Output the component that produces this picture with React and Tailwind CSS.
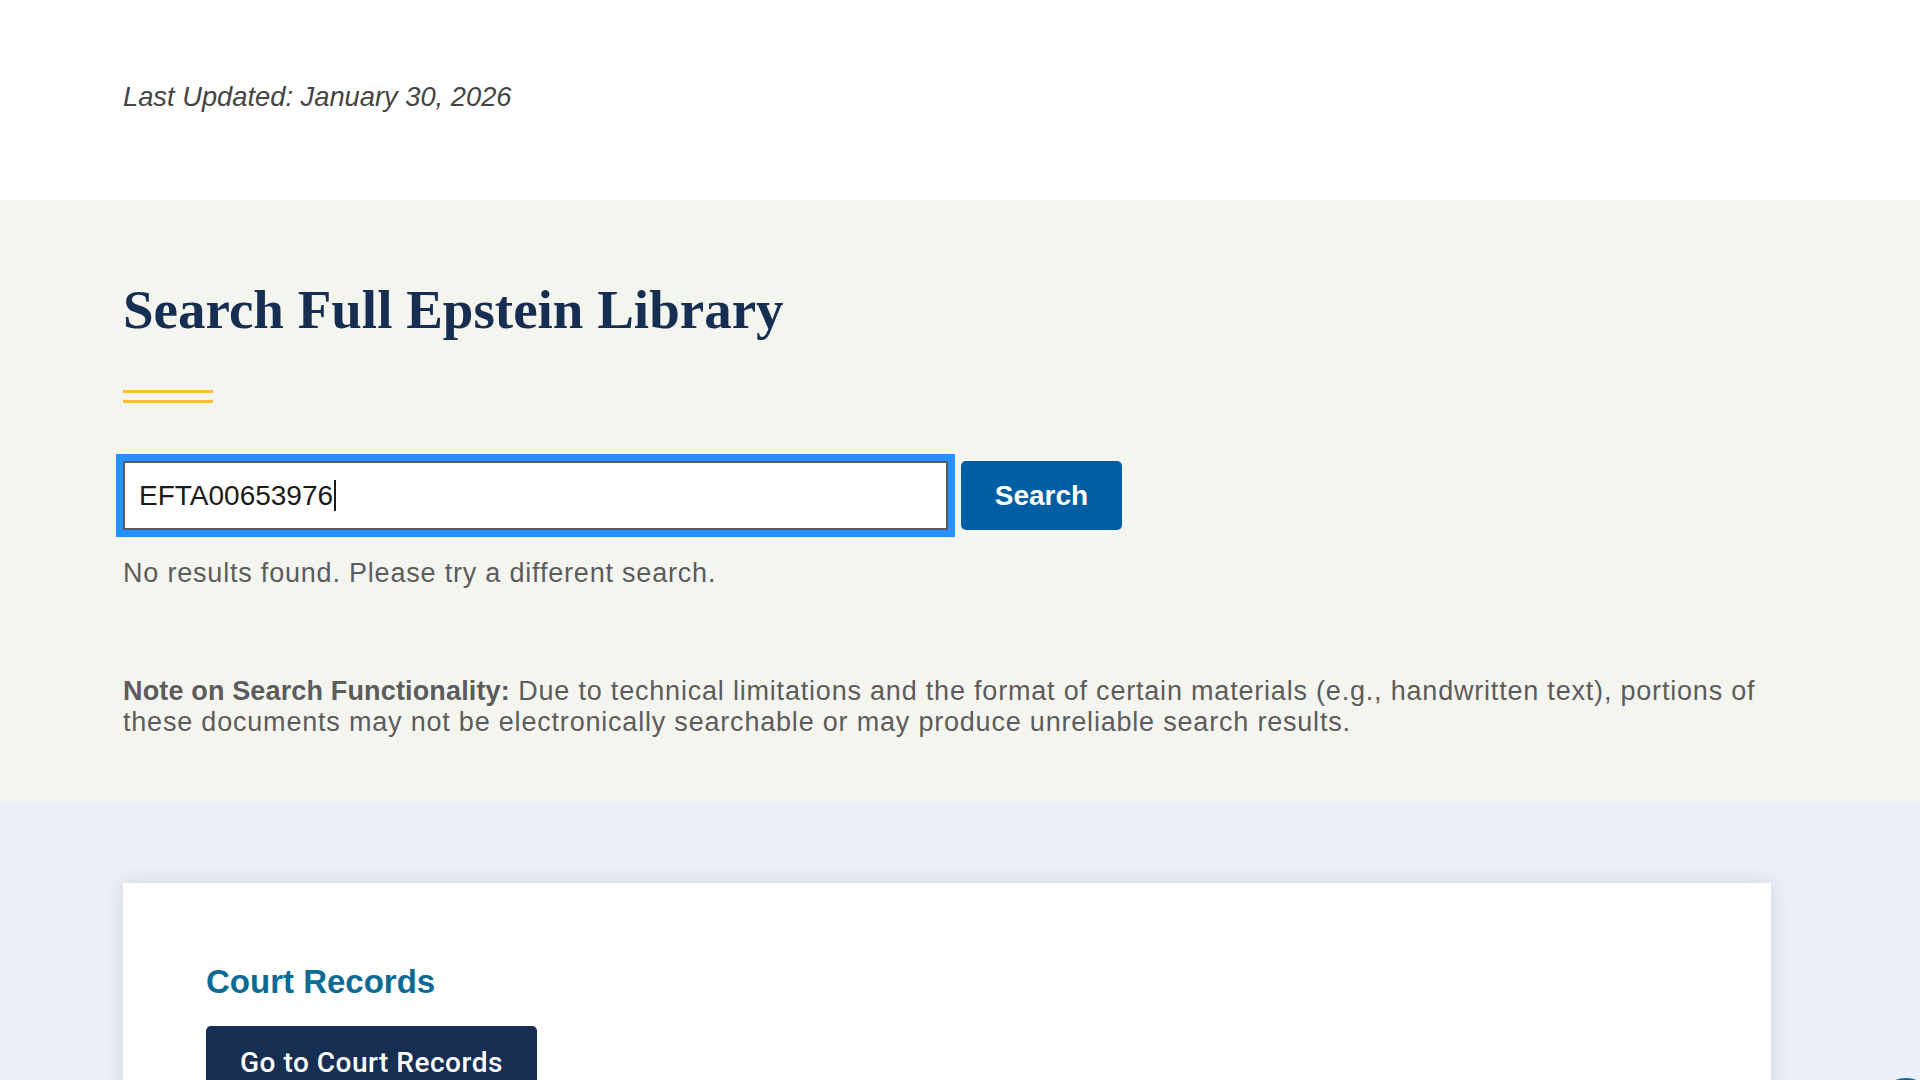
import React from "react";

const sans = { fontFamily: '"Liberation Sans", Arial, sans-serif' };

function GoldRule() {
  return (
    <div className="flex w-[90px] flex-col gap-[7px]">
      <div className="h-[3px] bg-[#ffbe2e]" />
      <div className="h-[3px] bg-[#ffbe2e]" />
    </div>
  );
}

function SearchBar() {
  return (
    <div className="flex items-start gap-[13px]">
      <div
        role="textbox"
        aria-label="Search the library"
        className="flex h-[69px] w-[825px] items-center border-2 border-[#565c65] bg-white pl-[14px] text-[28px] text-[#1b1b1b] outline-[7px] outline-solid outline-[#2491ff]"
      >
        <span>EFTA00653976</span>
        <span className="ml-px h-[31px] w-[1.5px] bg-[#1b1b1b]" />
      </div>
      <button
        type="button"
        className="h-[69px] w-[161px] rounded-[5px] bg-[#005ea2] text-[28px] font-bold text-white"
      >
        Search
      </button>
    </div>
  );
}

export default function App() {
  return (
    <div className="min-h-screen bg-[#ebeff8]" style={sans}>
      <header className="h-[200px] bg-white pl-[123px] pt-[81px]">
        <p className="text-[27.3px] italic leading-[32px] text-[#454545]">
          Last Updated: January 30, 2026
        </p>
      </header>

      <section className="bg-[#f5f5f0] pb-[63px] pl-[123px] pt-[82px]">
        <div className="w-[1648px]">
          <h1 className="font-['Liberation_Serif',Times,serif] text-[55px] font-bold leading-none text-[#162e51]">
            Search Full Epstein Library
          </h1>
          <div className="mt-[53px]">
            <GoldRule />
          </div>
          <div className="mt-[58px]">
            <SearchBar />
          </div>
          <p className="mt-[27px] text-[27px] leading-[32px] tracking-[0.8px] text-[#5c5c5c]">
            No results found. Please try a different search.
          </p>
          <p className="mt-[87px] text-[27px] leading-[31px] tracking-[0.8px] text-[#5c5c5c]">
            <strong className="font-bold tracking-[0.15px]">Note on Search Functionality:</strong>{" "}
            Due to technical limitations and the format of certain materials (e.g., handwritten
            text), portions of these documents may not be electronically searchable or may produce
            unreliable search results.
          </p>
        </div>
      </section>

      <section className="pb-[80px] pl-[123px] pt-[82px]">
        <div className="w-[1648px] bg-white pb-[80px] pl-[83px] pt-[79px] shadow-[0_0_18px_rgba(30,45,70,0.13)]">
          <h2 className="text-[33px] font-bold leading-[40px] text-[#0d6a95]">Court Records</h2>
          <a
            href="#court-records"
            className="mt-[24px] inline-flex h-[73px] items-center rounded-[5px] bg-[#162e51] px-[34px] font-['Roboto',sans-serif] text-[28px] font-medium tracking-[0.5px] text-white"
          >
            Go to Court Records
          </a>
        </div>
      </section>

      <a
        href="#top"
        aria-label="Back to top"
        className="fixed bottom-[-58px] right-[-16px] h-[60px] w-[60px] rounded-full bg-[#1a6590]"
      />
    </div>
  );
}
